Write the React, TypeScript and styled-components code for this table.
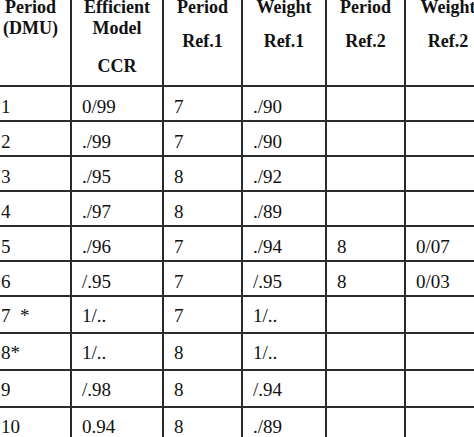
import React from "react";
import styled, { createGlobalStyle } from "styled-components";

const GlobalStyle = createGlobalStyle`
  html, body {
    margin: 0;
    padding: 0;
    background: #ffffff;
    overflow: hidden;
  }
  body {
    font-family: "Liberation Serif", "Times New Roman", serif;
    color: #111111;
  }
`;

const Page = styled.div`
  width: 474px;
  height: 437px;
  overflow: hidden;
  background: #ffffff;
`;

const Table = styled.table`
  border-collapse: collapse;
  table-layout: fixed;
  width: 501px;
  margin: -5px 0 0 -11px;
  font-size: 19px;
  line-height: 21px;
`;

const Col = styled.col<{ $w: number }>`
  width: ${p => p.$w}px;
`;

const HeadCell = styled.th`
  height: 88px;
  padding: 0 4px;
  border: 2px solid #2b2b2b;
  vertical-align: top;
  text-align: center;
  font-size: 18px;
  font-weight: 700;
`;

const HeadLine = styled.div<{ $gap: number }>`
  margin-top: ${p => p.$gap}px;
`;

const Cell = styled.td<{ $tall?: boolean }>`
  height: ${p => (p.$tall ? "29px" : "30px")};
  padding: 0 4px ${p => (p.$tall ? "6px" : "3px")} 10px;
  border: 2px solid #2b2b2b;
  vertical-align: bottom;
  text-align: left;
  white-space: pre;
`;

const widths = [81, 92, 79, 84, 79, 86];

// each header: its lines, and the space above the second block
const headers: { lines: string[]; gap: number }[] = [
  { lines: ["Period\n(DMU)"], gap: 0 },
  { lines: ["Efficient\nModel", "CCR"], gap: 17 },
  { lines: ["Period", "Ref.1"], gap: 13 },
  { lines: ["Weight", "Ref.1"], gap: 13 },
  { lines: ["Period", "Ref.2"], gap: 13 },
  { lines: ["Weight", "Ref.2"], gap: 13 },
];

const rows: string[][] = [
  ["1", "0/99", "7", "./90", "", ""],
  ["2", "./99", "7", "./90", "", ""],
  ["3", "./95", "8", "./92", "", ""],
  ["4", "./97", "8", "./89", "", ""],
  ["5", "./96", "7", "./94", "8", "0/07"],
  ["6", "/.95", "7", "/.95", "8", "0/03"],
  ["7  *", "1/..", "7", "1/..", "", ""],
  ["8*", "1/..", "8", "1/..", "", ""],
  ["9", "/.98", "8", "/.94", "", ""],
  ["10", "0.94", "8", "./89", "", ""],
];

const App = () => {
  return (
    <Page>
      <GlobalStyle />
      <Table>
        <colgroup>
          {widths.map((w, i) => (
            <Col key={i} $w={w} />
          ))}
        </colgroup>
        <thead>
          <tr>
            {headers.map((h, i) => (
              <HeadCell key={i}>
                {h.lines.map((line, j) => (
                  <HeadLine key={j} $gap={j > 0 ? h.gap : 0}>
                    {line.split("\n").map((part, k) => (
                      <React.Fragment key={k}>
                        {k > 0 && <br />}
                        {part}
                      </React.Fragment>
                    ))}
                  </HeadLine>
                ))}
              </HeadCell>
            ))}
          </tr>
        </thead>
        <tbody>
          {rows.map((r, i) => (
            <tr key={i}>
              {r.map((v, j) => (
                <Cell key={j} $tall={i >= 6}>
                  {v}
                </Cell>
              ))}
            </tr>
          ))}
        </tbody>
      </Table>
    </Page>
  );
};

export default App;
